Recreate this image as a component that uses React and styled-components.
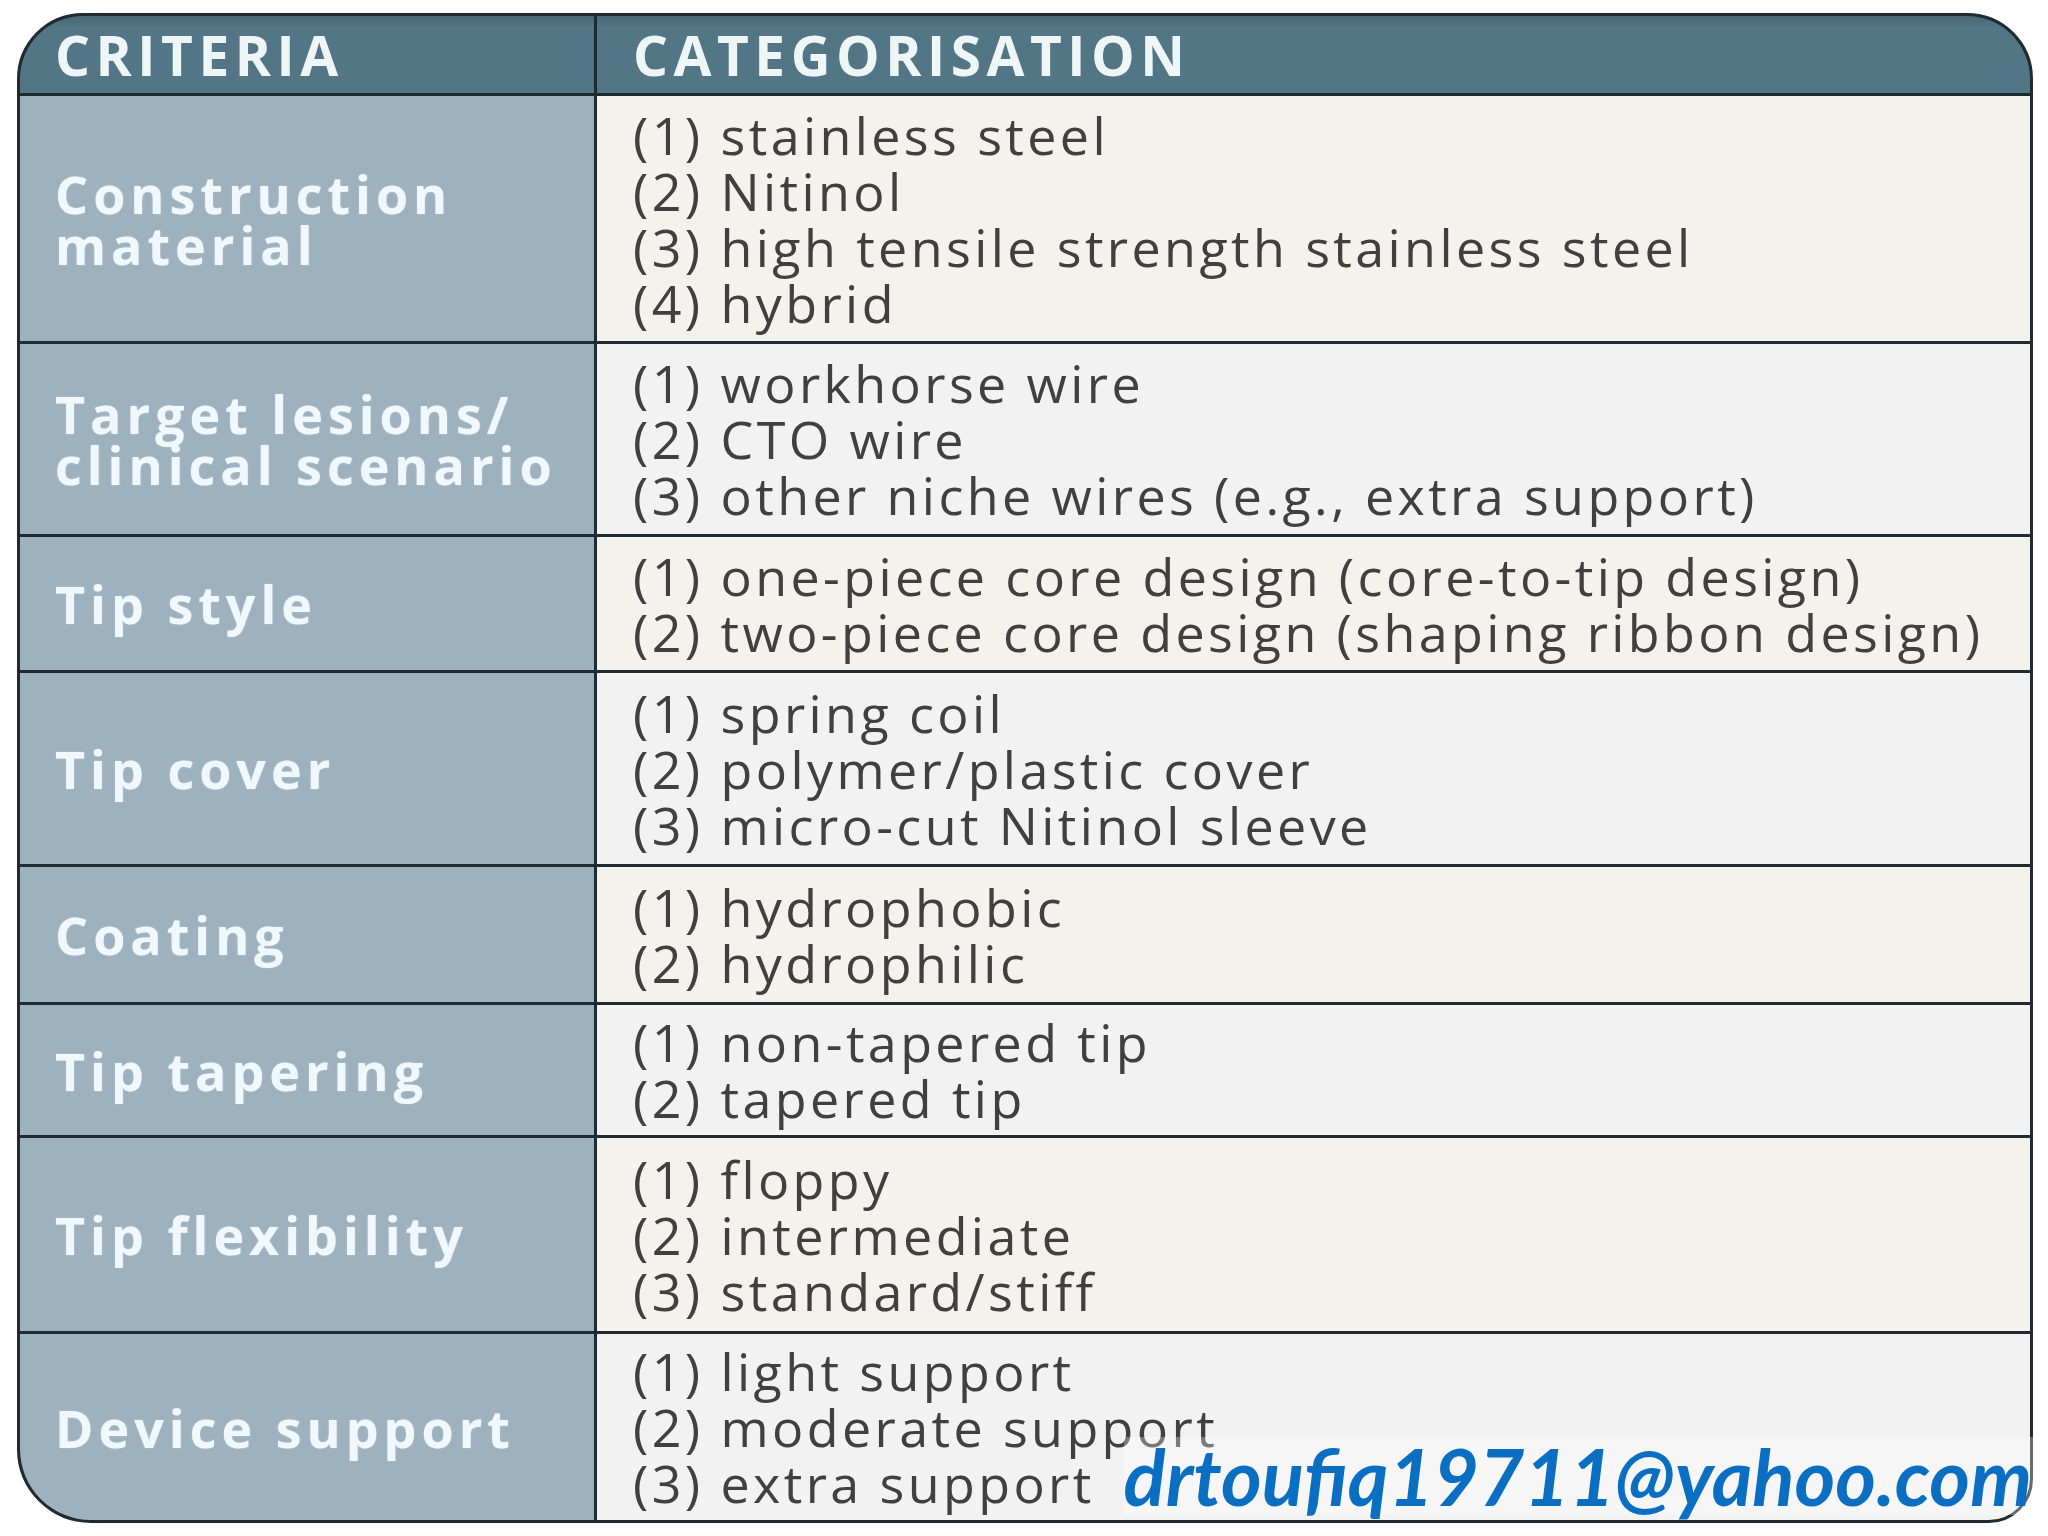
import React from "react";
import styled, { createGlobalStyle } from "styled-components";

const Global = createGlobalStyle`
  html, body { margin: 0; padding: 0; background: #ffffff; }
  body { font-family: "Open Sans", "Liberation Sans", sans-serif; }
`;

const Page = styled.div`
  position: relative;
  width: 2048px;
  height: 1536px;
  padding: 13px 0 0 17px;
  box-sizing: border-box;
`;

const Table = styled.div`
  width: 2016px;
  height: 1510px;
  box-sizing: border-box;
  display: grid;
  grid-template-columns: 574px 1fr;
  grid-template-rows: 77px 245px 190px 133px 191px 135px 130px 193px 186px;
  gap: 3px;
  background: #1f2b30;
  border: 3px solid #1f2b30;
  border-radius: 66px 66px 44px 74px;
  overflow: hidden;
`;

const HeadCell = styled.div`
  display: flex;
  align-items: center;
  padding-left: ${(p) => p.$pad}px;
  background: linear-gradient(#4a6671 0%, #527686 14%, #527686 100%);
  color: #eef6f8;
  font-family: "Open Sans", sans-serif;
  font-weight: 700;
  font-size: 55px;
  letter-spacing: 5.5px;
  text-transform: uppercase;
`;

const LabelCell = styled.div`
  display: flex;
  align-items: center;
  padding-left: 35px;
  background: #9db1bf;
  color: #f1f8fb;
  font-family: "Open Sans", sans-serif;
  font-weight: 700;
  font-size: 52px;
  line-height: 51px;
  letter-spacing: 5px;
  text-shadow: 0 0 2px rgba(255, 255, 255, 0.35);
`;

const ValueCell = styled.div`
  display: flex;
  flex-direction: column;
  justify-content: center;
  padding-left: 36px;
  background: ${(p) => (p.$alt ? "#f3f2f2" : "#f4f2ed")};
  color: #404040;
  font-family: "Open Sans", sans-serif;
  font-size: 52px;
  line-height: 56px;
  letter-spacing: 3.4px;
  white-space: nowrap;
`;

const Watermark = styled.div`
  position: absolute;
  right: 14px;
  top: 1437px;
  font-family: Lato, "Open Sans", sans-serif;
  font-weight: 700;
  font-style: italic;
  font-size: 78px;
  line-height: 78px;
  color: #0a6fc2;
  background: rgba(255, 255, 255, 0.3);
  padding-right: 2px;
`;

const rows = [
  {
    label: ["Construction", "material"],
    items: [
      "(1) stainless steel",
      "(2) Nitinol",
      "(3) high tensile strength stainless steel",
      "(4) hybrid",
    ],
  },
  {
    label: ["Target lesions/", "clinical scenario"],
    items: ["(1) workhorse wire", "(2) CTO wire", "(3) other niche wires (e.g., extra support)"],
  },
  {
    label: ["Tip style"],
    items: [
      "(1) one-piece core design (core-to-tip design)",
      "(2) two-piece core design (shaping ribbon design)",
    ],
  },
  {
    label: ["Tip cover"],
    items: ["(1) spring coil", "(2) polymer/plastic cover", "(3) micro-cut Nitinol sleeve"],
  },
  { label: ["Coating"], items: ["(1) hydrophobic", "(2) hydrophilic"] },
  { label: ["Tip tapering"], items: ["(1) non-tapered tip", "(2) tapered tip"] },
  {
    label: ["Tip flexibility"],
    items: ["(1) floppy", "(2) intermediate", "(3) standard/stiff"],
  },
  {
    label: ["Device support"],
    items: ["(1) light support", "(2) moderate support", "(3) extra support"],
  },
];

export default function App() {
  return (
    <>
      <Global />
      <Page>
        <Table>
          <HeadCell $pad={35}>Criteria</HeadCell>
          <HeadCell $pad={36}>Categorisation</HeadCell>
          {rows.map((r, i) => (
            <React.Fragment key={i}>
              <LabelCell>
                <div>
                  {r.label.map((l, j) => (
                    <div key={j}>{l}</div>
                  ))}
                </div>
              </LabelCell>
              <ValueCell $alt={i % 2 === 1}>
                {r.items.map((t, j) => (
                  <div key={j}>{t}</div>
                ))}
              </ValueCell>
            </React.Fragment>
          ))}
        </Table>
        <Watermark>drtoufiq19711@yahoo.com</Watermark>
      </Page>
    </>
  );
}
